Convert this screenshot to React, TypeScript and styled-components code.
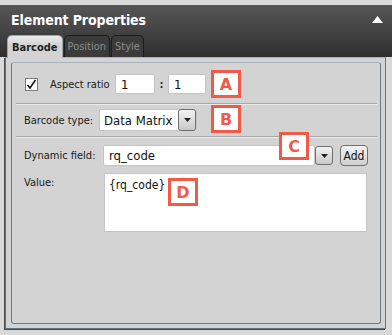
import React from "react";
import styled, { createGlobalStyle } from "styled-components";

const Global = createGlobalStyle`
  html, body { margin: 0; padding: 0; background: #d9d9d9; }
  * { box-sizing: border-box; }
`;

const uiFont = `"DejaVu Sans Condensed", "DejaVu Sans", sans-serif`;

const Page = styled.div`
  width: 392px;
  height: 335px;
  display: flex;
  flex-direction: column;
  background: #d9d9d9;
  font-family: ${uiFont};
  overflow: hidden;
`;

const Header = styled.div`
  margin-top: 5px;
  height: 52px;
  background: linear-gradient(#575757, #2f2f2f);
  display: flex;
  flex-direction: column;
`;

const TitleRow = styled.div`
  height: 29px;
  display: flex;
  align-items: center;
  justify-content: space-between;
  padding: 0 9px 0 11px;
`;

const Title = styled.div`
  color: #ffffff;
  font-weight: bold;
  font-size: 14px;
  letter-spacing: -0.1px;
`;

const CollapseIcon = styled.svg`
  width: 11px;
  height: 7px;
  display: block;
`;

const Tabs = styled.div`
  display: flex;
  align-items: flex-end;
  gap: 1px;
  padding-left: 7px;
  height: 23px;
`;

const Tab = styled.div<{ $active?: boolean }>`
  height: ${(p) => (p.$active ? 23 : 22)}px;
  padding: 0 ${(p) => (p.$active ? 4 : 3)}px;
  display: flex;
  align-items: center;
  font-size: 11px;
  font-weight: ${(p) => (p.$active ? "bold" : "normal")};
  border: 1px solid ${(p) => (p.$active ? "#9aa4ac" : "#1c1c1c")};
  border-bottom: none;
  border-radius: 5px 5px 0 0;
  background: ${(p) => (p.$active ? "linear-gradient(#ececec, #d3d3d3 40%)" : "#3b3b3b")};
  color: ${(p) => (p.$active ? "#1e1e1e" : "#8c8c8c")};
  position: relative;
  margin-bottom: ${(p) => (p.$active ? "-1px" : "0")};
  z-index: ${(p) => (p.$active ? 2 : 1)};
`;

const Panel = styled.div`
  flex: 1;
  margin: 0 6px 6px 5px;
  border: 1px solid #66717b;
  border-top-color: #a8b3bc;
  background: #d3d3d3;
  padding: 4px 4px 4px 5px;
  display: flex;
  box-shadow: -1px 1px 0 #4a4a4a;
`;

const GroupBox = styled.div`
  flex: 1;
  position: relative;
  border: 1px solid #6e7984;
  border-top-color: #a9b3bb;
  border-radius: 3px;
  display: flex;
  flex-direction: column;
`;

const Row = styled.div<{ $top: number; $h: number; $pl: number }>`
  display: flex;
  align-items: center;
  margin-top: ${(p) => p.$top}px;
  height: ${(p) => p.$h}px;
  padding-left: ${(p) => p.$pl}px;
`;

const TopRow = styled(Row)`
  align-items: flex-start;
`;

const Separator = styled.div<{ $top: number }>`
  margin: ${(p) => p.$top}px 3px 0 4px;
  height: 2px;
  border-top: 1px solid #a9a9a9;
  border-bottom: 1px solid #ececec;
`;

const Label = styled.div<{ $w: number; $pt?: number }>`
  width: ${(p) => p.$w}px;
  font-size: 11px;
  color: #1a1a1a;
  padding-top: ${(p) => p.$pt ?? 0}px;
  white-space: nowrap;
`;

const Check = styled.div`
  width: 13px;
  height: 13px;
  background: #fff;
  border: 1px solid #7b7b7b;
  margin-right: 12px;
  display: flex;
  align-items: center;
  justify-content: center;
`;

const TextBox = styled.div<{ $w: number; $h: number }>`
  width: ${(p) => p.$w}px;
  height: ${(p) => p.$h}px;
  background: #fff;
  border: 1px solid #c4c4c4;
  border-radius: 2px;
  font-size: 13px;
  color: #111;
  display: flex;
  align-items: center;
  padding-left: 5px;
  white-space: nowrap;
`;

const Colon = styled.div`
  width: 13px;
  text-align: center;
  font-size: 11px;
  font-weight: bold;
  color: #333;
`;

const Select = styled.div`
  width: 98px;
  height: 22px;
  background: #fff;
  border: 1px solid #c4c4c4;
  border-radius: 2px;
  display: flex;
  align-items: center;
  font-size: 13px;
  color: #111;
  padding-left: 4px;
  justify-content: space-between;
`;

const ArrowBtn = styled.div<{ $h: number }>`
  width: 18px;
  height: ${(p) => p.$h}px;
  border: 1px solid #6f6f6f;
  border-radius: 3px;
  background: linear-gradient(#f2f2f2, #c9c9c9);
  display: flex;
  align-items: center;
  justify-content: center;
  flex-shrink: 0;
`;

const Button = styled.div`
  margin-left: 7px;
  width: 28px;
  height: 21px;
  border: 1px solid #6f6f6f;
  border-radius: 4px;
  background: linear-gradient(#f4f4f4, #cfcfcf);
  font-size: 12px;
  color: #111;
  display: flex;
  align-items: center;
  justify-content: center;
`;

const TextArea = styled.div`
  width: 263px;
  height: 59px;
  background: #fff;
  border: 1px solid #c4c4c4;
  font-size: 12px;
  color: #111;
  padding: 4px 0 0 4px;
`;

const Badge = styled.div<{ $x: number; $y: number }>`
  position: absolute;
  left: ${(p) => p.$x}px;
  top: ${(p) => p.$y}px;
  width: 30px;
  height: 28px;
  background: #fff;
  border: 3px solid #f25a48;
  color: #f25a48;
  font-family: "DejaVu Sans", sans-serif;
  font-weight: bold;
  font-size: 16px;
  display: flex;
  align-items: center;
  justify-content: center;
`;

const Arrow = () => (
  <svg width="7" height="4" viewBox="0 0 7 4">
    <polygon points="0,0 7,0 3.5,4" fill="#222" />
  </svg>
);

export default function App() {
  return (
    <Page>
      <Global />
      <Header>
        <TitleRow>
          <Title>Element Properties</Title>
          <CollapseIcon viewBox="0 0 11 7">
            <polygon points="5.5,0 11,7 0,7" fill="#fff" />
          </CollapseIcon>
        </TitleRow>
        <Tabs>
          <Tab $active>Barcode</Tab>
          <Tab>Position</Tab>
          <Tab>Style</Tab>
        </Tabs>
      </Header>
      <Panel>
        <GroupBox>
          <Row $top={11} $h={20} $pl={13}>
            <Check>
              <svg width="11" height="11" viewBox="0 0 11 11">
                <path d="M1.5 6 L4 9 L9.5 1" stroke="#111" strokeWidth="1.6" fill="none" />
              </svg>
            </Check>
            <Label $w={65}>Aspect ratio</Label>
            <TextBox $w={40} $h={20}>1</TextBox>
            <Colon>:</Colon>
            <TextBox $w={38} $h={20}>1</TextBox>
          </Row>
          <Separator $top={9} />
          <Row $top={4} $h={22} $pl={12}>
            <Label $w={75}>Barcode type:</Label>
            <Select>
              Data Matrix
              <ArrowBtn $h={22}>
                <Arrow />
              </ArrowBtn>
            </Select>
          </Row>
          <Separator $top={5} />
          <Row $top={7} $h={21} $pl={12}>
            <Label $w={79}>Dynamic field:</Label>
            <TextBox $w={212} $h={21}>rq_code</TextBox>
            <ArrowBtn $h={19}>
              <Arrow />
            </ArrowBtn>
            <Button>Add</Button>
          </Row>
          <TopRow $top={7} $h={59} $pl={12}>
            <Label $w={80} $pt={3}>Value:</Label>
            <TextArea>{"{rq_code}"}</TextArea>
          </TopRow>
          <Badge $x={199} $y={7}>A</Badge>
          <Badge $x={199} $y={42}>B</Badge>
          <Badge $x={267} $y={69}>C</Badge>
          <Badge $x={156} $y={115}>D</Badge>
        </GroupBox>
      </Panel>
    </Page>
  );
}
